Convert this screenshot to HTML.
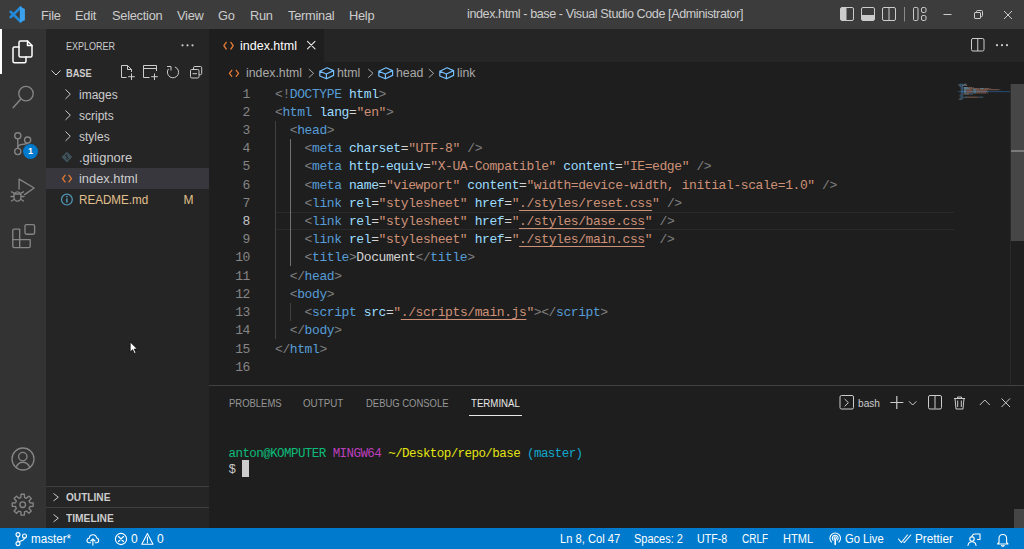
<!DOCTYPE html>
<html><head><meta charset="utf-8">
<style>
*{margin:0;padding:0;box-sizing:border-box}
html,body{width:1024px;height:549px;overflow:hidden;background:#1e1e1e;font-family:"Liberation Sans",sans-serif;position:relative}
.b{position:absolute}
svg{position:absolute;overflow:visible;left:0;top:0}
.x{position:absolute;white-space:nowrap;line-height:15px;transform-origin:0 0}
.m{top:7.6px;color:#cccccc;font-size:12.8px;letter-spacing:-0.25px}
.tr{font-size:12px;color:#cccccc}
.hd{font-size:11px;font-weight:bold;color:#cccccc}
.pt{font-size:11px;color:#969696;top:396px}
.st{font-size:12px;color:#ffffff;top:531.5px}
.bc{font-size:12.3px;color:#a9a9a9;top:66px}
.ln{position:absolute;left:209px;width:41px;text-align:right;color:#858585;font-family:"Liberation Mono",monospace;font-size:13px;letter-spacing:-0.4px;line-height:18.22px;height:18.22px}
.ln.act{color:#c6c6c6}
.cl{position:absolute;left:275px;color:#d4d4d4;font-family:"Liberation Mono",monospace;font-size:13px;letter-spacing:-0.41px;white-space:pre;line-height:18.22px;height:18.22px}
.p{color:#808080}.t{color:#569cd6}.a{color:#9cdcfe}.s{color:#ce9178}.w{color:#d4d4d4}
.u{text-decoration:underline;text-decoration-color:#ce9178;text-underline-offset:3px}
.term{position:absolute;font-family:"Liberation Mono",monospace;font-size:12.5px;letter-spacing:-0.56px;white-space:pre;line-height:16.4px;color:#cccccc}
</style></head><body>
<!-- backgrounds -->
<div class="b" style="left:0;top:0;width:1024px;height:29px;background:#3c3c3c"></div>
<div class="b" style="left:0;top:29px;width:46px;height:499px;background:#333333"></div>
<div class="b" style="left:46px;top:29px;width:163px;height:499px;background:#252526"></div>
<div class="b" style="left:209px;top:29px;width:815px;height:33px;background:#252526"></div>
<div class="b" style="left:209px;top:29px;width:115px;height:33px;background:#1e1e1e"></div>
<div class="b" style="left:209px;top:385px;width:815px;height:1px;background:#414141"></div>
<div class="b" style="left:0;top:528px;width:1024px;height:21px;background:#007acc"></div>
<div class="b" style="left:0;top:29px;width:2px;height:45px;background:#ffffff"></div>
<div class="b" style="left:46px;top:168px;width:163px;height:21px;background:#37373d"></div>
<div class="b" style="left:46px;top:486px;width:163px;height:1px;background:#3f3f40"></div>
<div class="b" style="left:46px;top:507px;width:163px;height:1px;background:#3f3f40"></div>

<!-- TITLE TEXT -->
<div class="x m" style="left:41px">File</div>
<div class="x m" style="left:75px">Edit</div>
<div class="x m" style="left:112px">Selection</div>
<div class="x m" style="left:177px">View</div>
<div class="x m" style="left:218px">Go</div>
<div class="x m" style="left:250px">Run</div>
<div class="x m" style="left:288px">Terminal</div>
<div class="x m" style="left:349px">Help</div>
<div class="x m" style="left:467px;font-size:12.6px;letter-spacing:-0.42px;top:7px">index.html - base - Visual Studio Code [Administrator]</div>

<!-- SIDEBAR TEXT -->
<div class="x hd" style="left:65.5px;top:39px;font-weight:normal;transform:scaleX(0.82)">EXPLORER</div>
<div class="x hd" style="left:65.5px;top:66px;transform:scaleX(0.84)">BASE</div>
<div class="x tr" style="left:79px;top:88px">images</div>
<div class="x tr" style="left:79px;top:109px">scripts</div>
<div class="x tr" style="left:79px;top:130px">styles</div>
<div class="x tr" style="left:79px;top:151px;transform:scaleX(1.08)">.gitignore</div>
<div class="x tr" style="left:79px;top:172px;transform:scaleX(1.07)">index.html</div>
<div class="x tr" style="left:78.8px;top:193.3px;color:#e2c08d;transform:scaleX(0.97)">README.md</div>
<div class="x tr" style="left:183.5px;top:193px;color:#e2c08d">M</div>
<div class="x hd" style="left:65.5px;top:490px;transform:scaleX(0.92)">OUTLINE</div>
<div class="x hd" style="left:66px;top:511px;transform:scaleX(0.93)">TIMELINE</div>

<!-- TAB + BREADCRUMB -->
<div class="x" style="left:240px;top:39.3px;font-size:12.5px;color:#ffffff">index.html</div>
<div class="x bc" style="left:246px">index.html</div>
<div class="x bc" style="left:337px">html</div>
<div class="x bc" style="left:396px">head</div>
<div class="x bc" style="left:457px">link</div>

<!-- EDITOR DECORATIONS -->
<div class="b" style="left:275px;top:212px;width:679px;height:18px;border-top:1px solid #2a2a2a;border-bottom:1px solid #2a2a2a"></div>
<div class="b" style="left:275px;top:120.5px;width:1px;height:218.6px;background:#404040"></div>
<div class="b" style="left:290px;top:138.7px;width:1px;height:127.5px;background:#707070"></div>
<div class="b" style="left:290px;top:302.7px;width:1px;height:18.2px;background:#404040"></div>
<div class="ln" style="top:85.50px">1</div>
<div class="cl" style="top:85.50px"><span class="p">&lt;!</span><span class="t">DOCTYPE</span><span class="w"> </span><span class="a">html</span><span class="p">&gt;</span></div>
<div class="ln" style="top:103.72px">2</div>
<div class="cl" style="top:103.72px"><span class="p">&lt;</span><span class="t">html</span><span class="w"> </span><span class="a">lang</span><span class="w">=</span><span class="s">&quot;en&quot;</span><span class="p">&gt;</span></div>
<div class="ln" style="top:121.94px">3</div>
<div class="cl" style="top:121.94px"><span class="w">  </span><span class="p">&lt;</span><span class="t">head</span><span class="p">&gt;</span></div>
<div class="ln" style="top:140.16px">4</div>
<div class="cl" style="top:140.16px"><span class="w">    </span><span class="p">&lt;</span><span class="t">meta</span><span class="w"> </span><span class="a">charset</span><span class="w">=</span><span class="s">&quot;UTF-8&quot;</span><span class="w"> </span><span class="p">/&gt;</span></div>
<div class="ln" style="top:158.38px">5</div>
<div class="cl" style="top:158.38px"><span class="w">    </span><span class="p">&lt;</span><span class="t">meta</span><span class="w"> </span><span class="a">http-equiv</span><span class="w">=</span><span class="s">&quot;X-UA-Compatible&quot;</span><span class="w"> </span><span class="a">content</span><span class="w">=</span><span class="s">&quot;IE=edge&quot;</span><span class="w"> </span><span class="p">/&gt;</span></div>
<div class="ln" style="top:176.60px">6</div>
<div class="cl" style="top:176.60px"><span class="w">    </span><span class="p">&lt;</span><span class="t">meta</span><span class="w"> </span><span class="a">name</span><span class="w">=</span><span class="s">&quot;viewport&quot;</span><span class="w"> </span><span class="a">content</span><span class="w">=</span><span class="s">&quot;width=device-width, initial-scale=1.0&quot;</span><span class="w"> </span><span class="p">/&gt;</span></div>
<div class="ln" style="top:194.82px">7</div>
<div class="cl" style="top:194.82px"><span class="w">    </span><span class="p">&lt;</span><span class="t">link</span><span class="w"> </span><span class="a">rel</span><span class="w">=</span><span class="s">&quot;stylesheet&quot;</span><span class="w"> </span><span class="a">href</span><span class="w">=</span><span class="s">&quot;</span><span class="s u">./styles/reset.css</span><span class="s">&quot;</span><span class="w"> </span><span class="p">/&gt;</span></div>
<div class="ln act" style="top:213.04px">8</div>
<div class="cl" style="top:213.04px"><span class="w">    </span><span class="p">&lt;</span><span class="t">link</span><span class="w"> </span><span class="a">rel</span><span class="w">=</span><span class="s">&quot;stylesheet&quot;</span><span class="w"> </span><span class="a">href</span><span class="w">=</span><span class="s">&quot;</span><span class="s u">./styles/base.css</span><span class="s">&quot;</span><span class="w"> </span><span class="p">/&gt;</span></div>
<div class="ln" style="top:231.26px">9</div>
<div class="cl" style="top:231.26px"><span class="w">    </span><span class="p">&lt;</span><span class="t">link</span><span class="w"> </span><span class="a">rel</span><span class="w">=</span><span class="s">&quot;stylesheet&quot;</span><span class="w"> </span><span class="a">href</span><span class="w">=</span><span class="s">&quot;</span><span class="s u">./styles/main.css</span><span class="s">&quot;</span><span class="w"> </span><span class="p">/&gt;</span></div>
<div class="ln" style="top:249.48px">10</div>
<div class="cl" style="top:249.48px"><span class="w">    </span><span class="p">&lt;</span><span class="t">title</span><span class="p">&gt;</span><span class="w">Document</span><span class="p">&lt;/</span><span class="t">title</span><span class="p">&gt;</span></div>
<div class="ln" style="top:267.70px">11</div>
<div class="cl" style="top:267.70px"><span class="w">  </span><span class="p">&lt;/</span><span class="t">head</span><span class="p">&gt;</span></div>
<div class="ln" style="top:285.92px">12</div>
<div class="cl" style="top:285.92px"><span class="w">  </span><span class="p">&lt;</span><span class="t">body</span><span class="p">&gt;</span></div>
<div class="ln" style="top:304.14px">13</div>
<div class="cl" style="top:304.14px"><span class="w">    </span><span class="p">&lt;</span><span class="t">script</span><span class="w"> </span><span class="a">src</span><span class="w">=</span><span class="s">&quot;</span><span class="s u">./scripts/main.js</span><span class="s">&quot;</span><span class="p">&gt;&lt;/</span><span class="t">script</span><span class="p">&gt;</span></div>
<div class="ln" style="top:322.36px">14</div>
<div class="cl" style="top:322.36px"><span class="w">  </span><span class="p">&lt;/</span><span class="t">body</span><span class="p">&gt;</span></div>
<div class="ln" style="top:340.58px">15</div>
<div class="cl" style="top:340.58px"><span class="p">&lt;/</span><span class="t">html</span><span class="p">&gt;</span></div>
<div class="ln" style="top:358.80px">16</div>
<div class="cl" style="top:358.80px"></div>
<svg width="1024" height="549" style="left:0;top:0"><rect x="958" y="91" width="52" height="1.2" fill="#264f78" opacity="0.8"/><g opacity="0.5"><rect x="958.50" y="83.80" width="1.10" height="1.07" fill="#808080"/><rect x="966.20" y="83.80" width="0.55" height="1.07" fill="#808080"/><rect x="959.60" y="83.80" width="3.85" height="1.07" fill="#569cd6"/><rect x="964.00" y="83.80" width="2.20" height="1.07" fill="#9cdcfe"/><rect x="958.50" y="84.87" width="0.55" height="1.07" fill="#808080"/><rect x="966.75" y="84.87" width="0.55" height="1.07" fill="#808080"/><rect x="959.05" y="84.87" width="2.20" height="1.07" fill="#569cd6"/><rect x="961.80" y="84.87" width="2.20" height="1.07" fill="#9cdcfe"/><rect x="964.00" y="84.87" width="0.55" height="1.07" fill="#d4d4d4"/><rect x="964.55" y="84.87" width="2.20" height="1.07" fill="#ce9178"/><rect x="959.60" y="85.94" width="0.55" height="1.07" fill="#808080"/><rect x="962.35" y="85.94" width="0.55" height="1.07" fill="#808080"/><rect x="960.15" y="85.94" width="2.20" height="1.07" fill="#569cd6"/><rect x="960.70" y="87.01" width="0.55" height="1.07" fill="#808080"/><rect x="972.80" y="87.01" width="1.10" height="1.07" fill="#808080"/><rect x="961.25" y="87.01" width="2.20" height="1.07" fill="#569cd6"/><rect x="964.00" y="87.01" width="3.85" height="1.07" fill="#9cdcfe"/><rect x="967.85" y="87.01" width="0.55" height="1.07" fill="#d4d4d4"/><rect x="968.40" y="87.01" width="3.85" height="1.07" fill="#ce9178"/><rect x="960.70" y="88.08" width="0.55" height="1.07" fill="#808080"/><rect x="989.85" y="88.08" width="1.10" height="1.07" fill="#808080"/><rect x="961.25" y="88.08" width="2.20" height="1.07" fill="#569cd6"/><rect x="964.00" y="88.08" width="5.50" height="1.07" fill="#9cdcfe"/><rect x="979.95" y="88.08" width="3.85" height="1.07" fill="#9cdcfe"/><rect x="969.50" y="88.08" width="0.55" height="1.07" fill="#d4d4d4"/><rect x="983.80" y="88.08" width="0.55" height="1.07" fill="#d4d4d4"/><rect x="970.05" y="88.08" width="9.35" height="1.07" fill="#ce9178"/><rect x="984.35" y="88.08" width="4.95" height="1.07" fill="#ce9178"/><rect x="960.70" y="89.15" width="0.55" height="1.07" fill="#808080"/><rect x="999.20" y="89.15" width="1.10" height="1.07" fill="#808080"/><rect x="961.25" y="89.15" width="2.20" height="1.07" fill="#569cd6"/><rect x="964.00" y="89.15" width="2.20" height="1.07" fill="#9cdcfe"/><rect x="972.80" y="89.15" width="3.85" height="1.07" fill="#9cdcfe"/><rect x="966.20" y="89.15" width="0.55" height="1.07" fill="#d4d4d4"/><rect x="976.65" y="89.15" width="0.55" height="1.07" fill="#d4d4d4"/><rect x="966.75" y="89.15" width="5.50" height="1.07" fill="#ce9178"/><rect x="977.20" y="89.15" width="11.00" height="1.07" fill="#ce9178"/><rect x="988.75" y="89.15" width="9.90" height="1.07" fill="#ce9178"/><rect x="960.70" y="90.22" width="0.55" height="1.07" fill="#808080"/><rect x="987.65" y="90.22" width="1.10" height="1.07" fill="#808080"/><rect x="961.25" y="90.22" width="2.20" height="1.07" fill="#569cd6"/><rect x="964.00" y="90.22" width="1.65" height="1.07" fill="#9cdcfe"/><rect x="973.35" y="90.22" width="2.20" height="1.07" fill="#9cdcfe"/><rect x="965.65" y="90.22" width="0.55" height="1.07" fill="#d4d4d4"/><rect x="975.55" y="90.22" width="0.55" height="1.07" fill="#d4d4d4"/><rect x="966.20" y="90.22" width="6.60" height="1.07" fill="#ce9178"/><rect x="976.10" y="90.22" width="11.00" height="1.07" fill="#ce9178"/><rect x="960.70" y="91.29" width="0.55" height="1.07" fill="#808080"/><rect x="987.10" y="91.29" width="1.10" height="1.07" fill="#808080"/><rect x="961.25" y="91.29" width="2.20" height="1.07" fill="#569cd6"/><rect x="964.00" y="91.29" width="1.65" height="1.07" fill="#9cdcfe"/><rect x="973.35" y="91.29" width="2.20" height="1.07" fill="#9cdcfe"/><rect x="965.65" y="91.29" width="0.55" height="1.07" fill="#d4d4d4"/><rect x="975.55" y="91.29" width="0.55" height="1.07" fill="#d4d4d4"/><rect x="966.20" y="91.29" width="6.60" height="1.07" fill="#ce9178"/><rect x="976.10" y="91.29" width="10.45" height="1.07" fill="#ce9178"/><rect x="960.70" y="92.36" width="0.55" height="1.07" fill="#808080"/><rect x="987.10" y="92.36" width="1.10" height="1.07" fill="#808080"/><rect x="961.25" y="92.36" width="2.20" height="1.07" fill="#569cd6"/><rect x="964.00" y="92.36" width="1.65" height="1.07" fill="#9cdcfe"/><rect x="973.35" y="92.36" width="2.20" height="1.07" fill="#9cdcfe"/><rect x="965.65" y="92.36" width="0.55" height="1.07" fill="#d4d4d4"/><rect x="975.55" y="92.36" width="0.55" height="1.07" fill="#d4d4d4"/><rect x="966.20" y="92.36" width="6.60" height="1.07" fill="#ce9178"/><rect x="976.10" y="92.36" width="10.45" height="1.07" fill="#ce9178"/><rect x="960.70" y="93.43" width="0.55" height="1.07" fill="#808080"/><rect x="964.00" y="93.43" width="0.55" height="1.07" fill="#808080"/><rect x="968.95" y="93.43" width="1.10" height="1.07" fill="#808080"/><rect x="972.80" y="93.43" width="0.55" height="1.07" fill="#808080"/><rect x="961.25" y="93.43" width="2.75" height="1.07" fill="#569cd6"/><rect x="970.05" y="93.43" width="2.75" height="1.07" fill="#569cd6"/><rect x="964.55" y="93.43" width="4.40" height="1.07" fill="#d4d4d4"/><rect x="959.60" y="94.50" width="1.10" height="1.07" fill="#808080"/><rect x="962.90" y="94.50" width="0.55" height="1.07" fill="#808080"/><rect x="960.70" y="94.50" width="2.20" height="1.07" fill="#569cd6"/><rect x="959.60" y="95.57" width="0.55" height="1.07" fill="#808080"/><rect x="962.35" y="95.57" width="0.55" height="1.07" fill="#808080"/><rect x="960.15" y="95.57" width="2.20" height="1.07" fill="#569cd6"/><rect x="960.70" y="96.64" width="0.55" height="1.07" fill="#808080"/><rect x="977.75" y="96.64" width="1.65" height="1.07" fill="#808080"/><rect x="982.70" y="96.64" width="0.55" height="1.07" fill="#808080"/><rect x="961.25" y="96.64" width="3.30" height="1.07" fill="#569cd6"/><rect x="979.40" y="96.64" width="3.30" height="1.07" fill="#569cd6"/><rect x="965.10" y="96.64" width="1.65" height="1.07" fill="#9cdcfe"/><rect x="966.75" y="96.64" width="0.55" height="1.07" fill="#d4d4d4"/><rect x="967.30" y="96.64" width="10.45" height="1.07" fill="#ce9178"/><rect x="959.60" y="97.71" width="1.10" height="1.07" fill="#808080"/><rect x="962.90" y="97.71" width="0.55" height="1.07" fill="#808080"/><rect x="960.70" y="97.71" width="2.20" height="1.07" fill="#569cd6"/><rect x="958.50" y="98.78" width="1.10" height="1.07" fill="#808080"/><rect x="961.80" y="98.78" width="0.55" height="1.07" fill="#808080"/><rect x="959.60" y="98.78" width="2.20" height="1.07" fill="#569cd6"/></g></svg>
<!-- scrollbar -->
<div class="b" style="left:1010px;top:84px;width:1px;height:301px;background:#2a2a2a"></div>
<div class="b" style="left:1011px;top:84px;width:13px;height:157px;background:#464646"></div>
<div class="b" style="left:1011px;top:150px;width:13px;height:2px;background:#7a7a7a"></div>

<div class="b" style="left:1014px;top:509px;width:10px;height:19px;background:#454545"></div>
<!-- PANEL TEXT -->
<div class="x pt" style="left:228.5px;transform:scaleX(0.86)">PROBLEMS</div>
<div class="x pt" style="left:303px;transform:scaleX(0.89)">OUTPUT</div>
<div class="x pt" style="left:366px;transform:scaleX(0.86)">DEBUG CONSOLE</div>
<div class="x pt" style="left:471px;color:#e7e7e7;transform:scaleX(0.88)">TERMINAL</div>
<div class="b" style="left:469px;top:414.5px;width:53px;height:1px;background:#e7e7e7"></div>
<div class="x" style="left:858px;top:396px;font-size:11.5px;color:#cccccc;transform:scaleX(0.88)">bash</div>
<div class="term" style="left:228.5px;top:445.8px"><span style="color:#0dbc79">anton@KOMPUTER</span> <span style="color:#bc3fbc">MINGW64</span> <span style="color:#e5e510">~/Desktop/repo/base</span> <span style="color:#11a8cd">(master)</span>
$ </div>
<div class="b" style="left:242px;top:460px;width:7px;height:16.5px;background:#cccccc"></div>

<!-- STATUS TEXT -->
<div class="x st" style="left:31px;transform:scaleX(0.97)">master*</div>
<div class="x st" style="left:131px">0</div>
<div class="x st" style="left:157px">0</div>
<div class="x st" style="left:560px;transform:scaleX(0.93)">Ln 8, Col 47</div>
<div class="x st" style="left:634.2px;transform:scaleX(0.918)">Spaces: 2</div>
<div class="x st" style="left:697px;transform:scaleX(0.886)">UTF-8</div>
<div class="x st" style="left:742px;transform:scaleX(0.83)">CRLF</div>
<div class="x st" style="left:783px;transform:scaleX(0.92)">HTML</div>
<div class="x st" style="left:845px;transform:scaleX(0.935)">Go Live</div>
<div class="x st" style="left:914.5px;transform:scaleX(0.98)">Prettier</div>

<!-- ICON OVERLAY (absolute coords) -->
<svg width="1024" height="549" fill="none" stroke-linecap="round" stroke-linejoin="round">
  <!-- logo -->
  <path d="M20.6 7.4 L10.6 17.2 M20.6 21.6 L10.6 11.8" stroke="#2489db" stroke-width="2.6" stroke-linecap="round"/>
  <path d="M19.8 6.5 L24.9 9 V20.2 L19.8 22.6 Z" fill="#3ba1ee" stroke="none"/>
  <!-- title bar right icons -->
  <g stroke="#cccccc" stroke-width="1" stroke-linecap="butt">
    <rect x="840.5" y="7.5" width="13" height="13" rx="1.5"/>
    <rect x="841" y="8" width="5.5" height="12" fill="#cccccc" stroke="none"/>
    <rect x="861.5" y="7.5" width="13" height="13" rx="1.5"/>
    <rect x="862" y="15" width="12" height="5" fill="#cccccc" stroke="none"/>
    <rect x="882.5" y="7.5" width="13" height="13" rx="1.5"/>
    <line x1="889" y1="8" x2="889" y2="20"/>
    <line x1="904.5" y1="7" x2="904.5" y2="21.5" stroke="#8a8a8a"/>
    <rect x="913.5" y="7.5" width="4.5" height="13" rx="1.2"/>
    <rect x="921.5" y="7.5" width="4.5" height="5" rx="1.5"/>
    <rect x="921.5" y="15.5" width="4.5" height="5" rx="1.5"/>
    <line x1="943.5" y1="14.5" x2="951.5" y2="14.5"/>
    <rect x="974.5" y="12.5" width="6" height="6" rx="0.5"/>
    <path d="M976.5 12.5 V11.5 Q976.5 10.5 977.5 10.5 H981.5 Q982.5 10.5 982.5 11.5 V15.5 Q982.5 16.5 981.5 16.5 H980.5"/>
    <path d="M1004 11 L1012 19 M1012 11 L1004 19"/>
  </g>
  <!-- activity: explorer -->
  <g stroke="#ffffff" stroke-width="1.5">
    <path d="M20.5 41 H27.5 L32 45.5 V55.5 Q32 57 30.5 57 H20.5 Q19 57 19 55.5 V42.5 Q19 41 20.5 41 Z"/>
    <path d="M27.5 41 V45.5 H32"/>
    <path d="M19 46.9 H14.5 Q13 46.9 13 48.4 V61.3 Q13 62.8 14.5 62.8 H24.5 Q26 62.8 26 61.3 V57"/>
  </g>
  <g stroke="#858585" stroke-width="1.35">
    <!-- search -->
    <circle cx="26" cy="93.6" r="7.2"/>
    <line x1="20.9" y1="98.9" x2="13.3" y2="107.6" stroke-width="1.5"/>
    <!-- scm -->
    <circle cx="17.8" cy="135.8" r="3.1"/>
    <circle cx="17.8" cy="151.5" r="3.1"/>
    <circle cx="27.6" cy="140.1" r="3.1"/>
    <line x1="17.8" y1="138.9" x2="17.8" y2="148.4"/>
    <path d="M17.8 147 Q18.5 144.5 22 144.3 Q26.5 144 27.2 143.2"/>
    <!-- debug -->
    <path d="M19.1 189 V179.2 L34.2 188 L24.6 194.6"/>
    <ellipse cx="17.5" cy="196.5" rx="3.6" ry="4.6"/>
    <path d="M13.9 194 H21.1 M11.5 191.8 L13.9 193 M23.5 191.8 L21.1 193 M11 196.5 H13.9 M21.1 196.5 H24 M11.5 201 L14 199.5 M23.5 201 L21 199.5"/>
    <!-- extensions -->
    <path d="M12.8 230.5 Q12.8 229.1 14.2 229.1 H19.7 V239.6 H30.2 V246.2 Q30.2 247.6 28.8 247.6 H14.2 Q12.8 247.6 12.8 246.2 Z"/>
    <path d="M12.8 239.6 H19.7 V247.6"/>
    <rect x="25" y="224.6" width="9.6" height="9.6" rx="1.4"/>
    <!-- accounts -->
    <circle cx="23" cy="459" r="11"/>
    <circle cx="22.8" cy="456.6" r="4.2"/>
    <path d="M16.2 466.8 Q18.5 462.2 22.8 462.2 Q27.2 462.2 29.6 466.8"/>
    <!-- gear -->
    <path d="M20.86 497.53 L21.04 494.23 L24.36 494.23 L24.54 497.53 L26.47 498.33 L28.93 496.12 L31.28 498.47 L29.07 500.93 L29.87 502.86 L33.17 503.04 L33.17 506.36 L29.87 506.54 L29.07 508.47 L31.28 510.93 L28.93 513.28 L26.47 511.07 L24.54 511.87 L24.36 515.17 L21.04 515.17 L20.86 511.87 L18.93 511.07 L16.47 513.28 L14.12 510.93 L16.33 508.47 L15.53 506.54 L12.23 506.36 L12.23 503.04 L15.53 502.86 L16.33 500.93 L14.12 498.47 L16.47 496.12 L18.93 498.33 Z"/>
    <circle cx="22.7" cy="504.7" r="2.8"/>
  </g>
  <!-- sidebar icons -->
  <g stroke="#cccccc" stroke-width="1" stroke-linecap="butt" stroke-linejoin="miter">
    <g fill="#cccccc" stroke="none"><circle cx="182.5" cy="45.3" r="1.1"/><circle cx="187.5" cy="45.3" r="1.1"/><circle cx="192.5" cy="45.3" r="1.1"/></g>
    <path d="M51.5 70.5 L56 75 L60.5 70.5"/>
    <!-- new file -->
    <path d="M126.5 77.5 H121.5 V65.5 H127.5 L131.5 69.5 V72"/><path d="M127.5 65.5 V69.5 H131.5"/><path d="M131.5 73.5 V80 M128.2 76.7 H134.8"/>
    <!-- new folder -->
    <path d="M149.5 77.5 H143.5 V65.5 H156.5 V71"/><path d="M143.5 68.5 H156.5"/><path d="M154.5 73.5 V80 M151.2 76.7 H157.8"/>
    <!-- refresh -->
    <path d="M174.9 66.94 A5.6 5.6 0 1 1 168.47 68.9"/><path d="M167 66.5 H171 V70.5"/>
    <!-- collapse -->
    <rect x="190.5" y="69.5" width="8.5" height="8.5" rx="1.3"/><path d="M193.5 69.5 V67.8 Q193.5 66.5 194.8 66.5 H200.4 Q201.7 66.5 201.7 67.8 V73.4 Q201.7 74.7 200.4 74.7 H199"/><path d="M192.5 73.7 H197"/>
    <!-- tree chevrons -->
    <path d="M65.5 89.5 L70.3 94.2 L65.5 98.9"/>
    <path d="M65.5 110.5 L70.3 115.2 L65.5 119.9"/>
    <path d="M65.5 131.5 L70.3 136.2 L65.5 140.9"/>
    <path d="M53.5 493.5 L58.3 497.2 L53.5 500.9"/>
    <path d="M53.5 514.5 L58.3 518.2 L53.5 521.9"/>
  </g>
  <!-- file icons -->
  <path d="M66.9 151.8 L72.2 157.1 L66.9 162.4 L61.6 157.1 Z" fill="#41535b" stroke="none"/>
  <path d="M65.2 155.2 L68.8 158.8 M66.9 154.5 V159.7" stroke="#252526" stroke-width="0.9"/>
  <path d="M65 175.3 L62.5 178.6 L65 181.9 M69 175.3 L71.5 178.6 L69 181.9" stroke="#e37933" stroke-width="1.35"/>
  <circle cx="66.9" cy="199.6" r="5.4" stroke="#519aba" stroke-width="1.2"/>
  <path d="M66.9 198.5 V202.6" stroke="#519aba" stroke-width="1.5" stroke-linecap="butt"/><circle cx="66.9" cy="196.6" r="0.85" fill="#519aba" stroke="none"/>
  <!-- tab icons -->
  <path d="M226.2 42.4 L223.9 45.7 L226.2 49 M230.9 42.4 L233.2 45.7 L230.9 49" stroke="#e37933" stroke-width="1.35"/>
  <path d="M307.5 41.3 L315 48.8 M315 41.3 L307.5 48.8" stroke="#e8e8e8" stroke-width="1.1"/>
  <g stroke="#cccccc" stroke-width="1" stroke-linecap="butt">
    <rect x="971.5" y="38.5" width="12.5" height="12.5" rx="1.5"/><line x1="977.75" y1="39" x2="977.75" y2="51"/>
  </g>
  <g fill="#cccccc"><circle cx="997" cy="45.2" r="1.1"/><circle cx="1002" cy="45.2" r="1.1"/><circle cx="1007" cy="45.2" r="1.1"/></g>
  <!-- breadcrumb icons -->
  <path d="M231.8 70.3 L229.4 73.3 L231.8 76.3 M236.2 70.3 L238.6 73.3 L236.2 76.3" stroke="#e37933" stroke-width="1.3"/>
  <g stroke="#a9a9a9" stroke-width="1" stroke-linecap="butt"><path d="M308.8 69 L313.6 73.3 L308.8 77.6"/><path d="M368.2 69 L373 73.3 L368.2 77.6"/><path d="M428.8 69 L433.6 73.3 L428.8 77.6"/></g>
  <g stroke="#75beff" stroke-width="1.2" stroke-linejoin="round">
    <path d="M319.8 71.2 L327 67.8 L333.6 70.6 V75.4 L326.4 78.8 L319.8 76 Z M319.8 71.2 L326.4 74 L333.6 70.6 M326.4 74 V78.8"/>
    <path transform="translate(59,0)" d="M319.8 71.2 L327 67.8 L333.6 70.6 V75.4 L326.4 78.8 L319.8 76 Z M319.8 71.2 L326.4 74 L333.6 70.6 M326.4 74 V78.8"/>
    <path transform="translate(120,0)" d="M319.8 71.2 L327 67.8 L333.6 70.6 V75.4 L326.4 78.8 L319.8 76 Z M319.8 71.2 L326.4 74 L333.6 70.6 M326.4 74 V78.8"/>
  </g>
  <!-- panel icons -->
  <g stroke="#cccccc" stroke-width="1" stroke-linecap="butt">
    <rect x="840" y="395.5" width="13.5" height="13.5" rx="1.5"/><path d="M844.6 399 L848.4 402.7 L844.6 406.4"/>
    <path d="M896.8 396 V409 M890.3 402.5 H903.3" stroke-width="1.2"/>
    <path d="M909 401.3 L912.7 405 L916.4 401.3"/>
    <rect x="928.5" y="395.5" width="13" height="13.5" rx="1.5"/><line x1="935" y1="396" x2="935" y2="408.5"/>
    <path d="M954 398.5 H965 M957.5 398.5 V397 H961.5 V398.5 M955 398.5 L956 409 H963 L964 398.5 M957.7 400.5 V407 M961.3 400.5 V407"/>
    <path d="M979.8 405 L984.8 400 L989.8 405"/>
    <path d="M1001.5 398.5 L1010 407 M1010 398.5 L1001.5 407"/>
  </g>
  <!-- status icons -->
  <g stroke="#ffffff" stroke-width="1.1">
    <circle cx="18" cy="534.6" r="2"/><circle cx="18" cy="543.6" r="2"/><circle cx="24.5" cy="536" r="2"/>
    <path d="M18 536.6 V541.6 M24.5 538 Q24.5 540.5 18.5 541.6"/>
    <path d="M90.5 542.8 H89.2 Q87 542.8 87 540.6 Q87 538.4 89.2 538.3 Q89.7 534.8 92.9 534.8 Q96.1 534.8 96.6 538 Q98.7 538.3 98.7 540.6 Q98.7 542.8 96.5 542.8 H95.3"/>
    <path d="M92.9 545.2 V539 M90.8 541 L92.9 538.9 L95 541"/>
    <circle cx="121" cy="539" r="5.6"/><path d="M118.5 536.5 L123.5 541.5 M123.5 536.5 L118.5 541.5"/>
    <path d="M147.4 533.5 L153 544.3 H141.8 Z"/><path d="M147.4 537 V540.6 M147.4 541.8 V542.8"/>
    <circle cx="835.2" cy="538" r="1.2"/><path d="M835.2 539.5 V544.5" stroke-width="1.6"/>
    <path d="M833.2 540.2 A2.9 2.9 0 1 1 837.2 540.2 M831.4 542 A5.3 5.3 0 1 1 839 542"/>
    <path d="M898.5 539 L901.3 542.5 L907.5 535 M903.8 542 L904.3 542.5 L910.8 535"/>
    <path d="M972 537 Q972 534 975 534 H980 V539.5 H977.5"/><circle cx="972" cy="539" r="2.2"/><path d="M968 545.5 Q968.5 541.8 972 541.8 Q975.5 541.8 976 545.5"/>
    <path d="M999 542.5 V538.5 Q999 534.5 1002.8 534.5 Q1006.6 534.5 1006.6 538.5 V542.5 L1008 544 H997.6 Z"/><path d="M1001.5 545.5 Q1002.8 546.8 1004.1 545.5"/>
  </g>
</svg>
<svg width="1024" height="549"><path d="M130.2 342 V352 L132.6 349.7 L134.4 353.6 L136 352.9 L134.2 349.1 L137.3 348.9 Z" fill="#ffffff" stroke="#000000" stroke-width="0.7" stroke-linejoin="round"/></svg>
<!-- scm badge -->
<div class="b" style="left:22.8px;top:143.5px;width:15.6px;height:15.6px;border-radius:50%;background:#007acc;color:#fff;font-size:9px;font-weight:bold;text-align:center;line-height:15.6px">1</div>
</body></html>
